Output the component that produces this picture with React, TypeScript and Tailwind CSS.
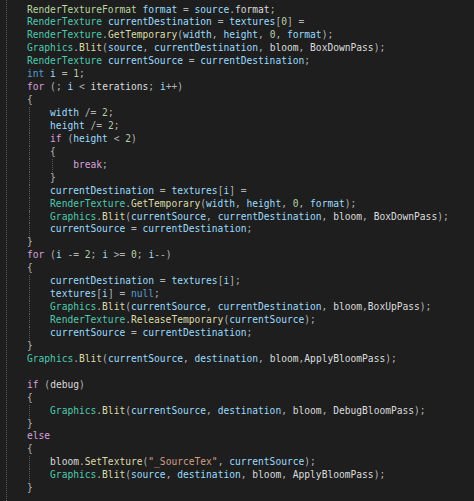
const code = `RenderTextureFormat format = source.format;
RenderTexture currentDestination = textures[0] =
RenderTexture.GetTemporary(width, height, 0, format);
Graphics.Blit(source, currentDestination, bloom, BoxDownPass);
RenderTexture currentSource = currentDestination;
int i = 1;
for (; i < iterations; i++)
{
    width /= 2;
    height /= 2;
    if (height < 2)
    {
        break;
    }
    currentDestination = textures[i] =
    RenderTexture.GetTemporary(width, height, 0, format);
    Graphics.Blit(currentSource, currentDestination, bloom, BoxDownPass);
    currentSource = currentDestination;
}
for (i -= 2; i >= 0; i--)
{
    currentDestination = textures[i];
    textures[i] = null;
    Graphics.Blit(currentSource, currentDestination, bloom,BoxUpPass);
    RenderTexture.ReleaseTemporary(currentSource);
    currentSource = currentDestination;
}
Graphics.Blit(currentSource, destination, bloom,ApplyBloomPass);

if (debug)
{
    Graphics.Blit(currentSource, destination, bloom, DebugBloomPass);
}
else
{
    bloom.SetTexture("_SourceTex", currentSource);
    Graphics.Blit(source, destination, bloom, ApplyBloomPass);
}`;

// token colours, VS dark theme
const colors = {
  type: 'text-[#4ec9b0]',
  enum: 'text-[#b8d7a3]',
  method: 'text-[#dcdcaa]',
  local: 'text-[#9cdcfe]',
  keyword: 'text-[#569cd6]',
  control: 'text-[#d8a0df]',
  number: 'text-[#b5cea8]',
  string: 'text-[#d69d85]',
  field: 'text-[#dcdcdc]',
  punct: 'text-[#b4b4b4]',
};

const types = ['RenderTexture', 'Graphics'];
const keywords = ['int', 'null'];
const control = ['for', 'if', 'break', 'else'];
const fields = ['bloom', 'BoxDownPass', 'BoxUpPass', 'ApplyBloomPass', 'DebugBloomPass', 'iterations', 'debug'];

function tokenize(text: string) {
  const parts = text.match(/"[^"]*"|[A-Za-z_]\w*|\d+|\s+|[^\w\s"]/g) ?? [];
  return parts.map((t, i) => {
    let kind: keyof typeof colors = 'punct';
    if (t.startsWith('"')) kind = 'string';
    else if (/^\d/.test(t)) kind = 'number';
    else if (/^[A-Za-z_]/.test(t)) {
      if (t === 'RenderTextureFormat') kind = 'enum';
      else if (types.includes(t)) kind = 'type';
      else if (keywords.includes(t)) kind = 'keyword';
      else if (control.includes(t)) kind = 'control';
      else if (parts[i + 1] === '(') kind = 'method';
      else if (fields.includes(t) || parts[i - 1] === '.') kind = 'field';
      else kind = 'local';
    }
    return { t, kind };
  });
}

function buildLines() {
  let depth = 0;
  return code.split('\n').map((raw) => {
    const trimmed = raw.trim();
    const indent = (raw.length - raw.trimStart().length) / 4;
    if (trimmed.startsWith('}')) depth--;
    const guides = depth;
    if (trimmed === '{') depth++;
    return { indent: Math.max(indent, guides), guides, tokens: tokenize(trimmed) };
  });
}

export default function App() {
  const lines = buildLines();

  return (
    <div className="w-[474px] h-[501px] overflow-hidden bg-[#1e1e1e] flex font-['DejaVu_Sans_Mono',monospace] text-[9.6px] leading-[12.95px]">
      {/* gutter */}
      <div className="w-[27px] flex-none">
        <div className="ml-[6px] h-full border-l border-dotted border-[#5c5c5c]"></div>
      </div>

      {/* code */}
      <div className="flex-1 pt-[3.5px] whitespace-pre">
        {lines.map((line, i) => (
          <div key={i} className="flex h-[12.95px]">
            {Array.from({ length: line.indent }).map((_, j) => (
              <div key={j} className="w-[4ch] flex-none h-full">
                {j < line.guides && (
                  <div className="ml-[1.5px] h-full border-l border-dotted border-[#5c5c5c]"></div>
                )}
              </div>
            ))}
            <span>
              {line.tokens.map((tok, k) => (
                <span key={k} className={colors[tok.kind]}>{tok.t}</span>
              ))}
            </span>
          </div>
        ))}
      </div>
    </div>
  );
}
